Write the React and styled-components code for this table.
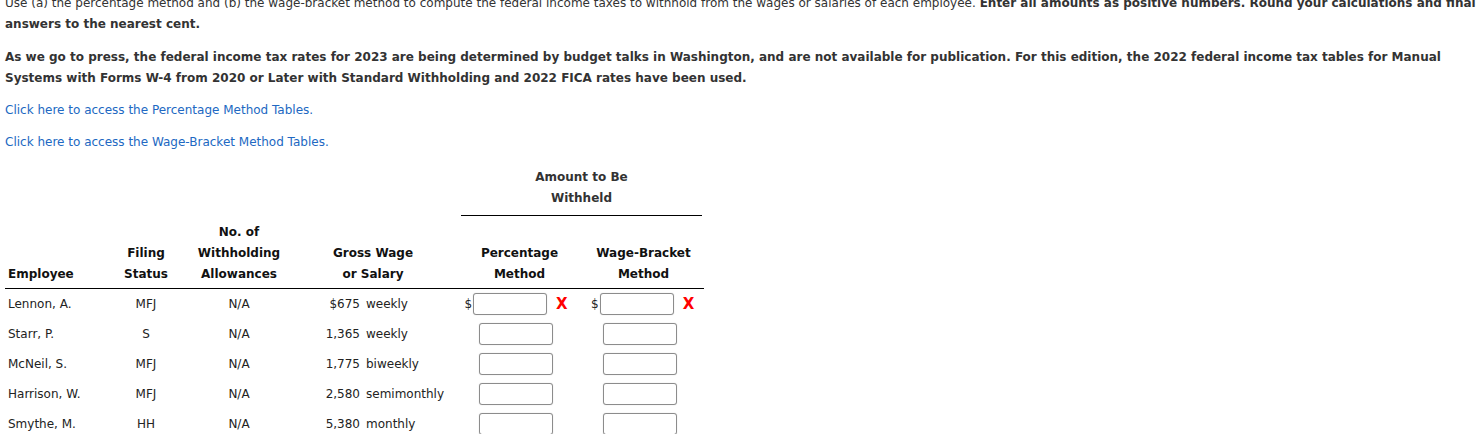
import React from "react";
import styled, { createGlobalStyle } from "styled-components";

const Global = createGlobalStyle`
  html, body { margin: 0; padding: 0; background: #fff; overflow: hidden; }
  body { font-family: "DejaVu Sans", Verdana, sans-serif; }
`;

const Page = styled.div`
  margin-top: -7px;
  padding-left: 5px;
  font-size: 12px;
  line-height: 21px;
  color: #333;
`;

const Para = styled.p`
  margin: 0 0 ${(p) => p.$gap ?? 11}px;
  font-weight: ${(p) => (p.$bold ? 700 : 400)};
`;

const Strong = styled.strong`
  font-weight: 700;
`;

const Link = styled.a`
  color: #2168c2;
  text-decoration: none;
  cursor: pointer;
`;

const Table = styled.table`
  border-collapse: collapse;
  table-layout: fixed;
  width: 699px;
  margin-top: 14px;
  font-size: 12px;
  line-height: 21px;
  color: #222;
`;

const GroupCell = styled.th`
  padding: 0;
  font-weight: 700;
  color: #333;
`;

const GroupHead = styled.div`
  margin: 0 2px 0 13px;
  padding-bottom: 6px;
  border-bottom: 1px solid #000;
  text-align: center;
`;

const HeadCell = styled.th`
  padding: 6px 0 3px ${(p) => (p.$left ? "3px" : "0")};
  border-bottom: 1px solid #000;
  vertical-align: bottom;
  text-align: ${(p) => (p.$left ? "left" : "center")};
  font-weight: 700;
  color: #111;
`;

const Cell = styled.td`
  height: 30px;
  padding: 0 ${(p) => p.$pr || 0}px 0 ${(p) => p.$pl || 0}px;
  vertical-align: middle;
  text-align: ${(p) => p.$align || "center"};
  white-space: nowrap;
`;

const Amount = styled.span`
  display: inline-block;
  width: 40px;
  text-align: right;
`;

const Unit = styled.span`
  margin-left: 6px;
`;

const Dollar = styled.span`
  margin-right: 1px;
  vertical-align: middle;
`;

const Input = styled.input`
  box-sizing: border-box;
  width: 74px;
  height: 22px;
  border: 1px solid #8c8c8c;
  border-radius: 3px;
  box-shadow: 0 0 1px rgba(0, 0, 0, 0.25);
  background: #fff;
  padding: 0 4px;
  margin: 0;
  vertical-align: middle;
  font: inherit;
`;

const Wrong = styled.span`
  margin-left: 9px;
  color: #f00;
  font-weight: 700;
  font-size: 15px;
  vertical-align: middle;
`;

const rows = [
  ["Lennon, A.", "MFJ", "N/A", "$675", "weekly"],
  ["Starr, P.", "S", "N/A", "1,365", "weekly"],
  ["McNeil, S.", "MFJ", "N/A", "1,775", "biweekly"],
  ["Harrison, W.", "MFJ", "N/A", "2,580", "semimonthly"],
  ["Smythe, M.", "HH", "N/A", "5,380", "monthly"],
];

function AnswerCell({ first }) {
  return (
    <Cell $pr={7}>
      {first && <Dollar>$</Dollar>}
      <Input type="text" />
      {first && <Wrong>X</Wrong>}
    </Cell>
  );
}

export default function App() {
  return (
    <>
      <Global />
      <Page>
        <Para $gap={12}>
          Use (a) the percentage method and (b) the wage-bracket method to compute the federal income taxes to
          withhold from the wages or salaries of each employee.{" "}
          <Strong>Enter all amounts as positive numbers. Round your calculations and final answers to the nearest cent.</Strong>
        </Para>
        <Para $bold>
          As we go to press, the federal income tax rates for 2023 are being determined by budget talks in Washington,
          and are not available for publication. For this edition, the 2022 federal income tax tables for Manual
          Systems with Forms W-4 from 2020 or Later with Standard Withholding and 2022 FICA rates have been used.
        </Para>
        <Para>
          <Link>Click here to access the Percentage Method Tables.</Link>
        </Para>
        <Para $gap={0}>
          <Link>Click here to access the Wage-Bracket Method Tables.</Link>
        </Para>
        <Table>
          <colgroup>
            <col style={{ width: 107 }} />
            <col style={{ width: 68 }} />
            <col style={{ width: 118 }} />
            <col style={{ width: 150 }} />
            <col style={{ width: 143 }} />
            <col style={{ width: 105 }} />
            <col style={{ width: 8 }} />
          </colgroup>
          <thead>
            <tr>
              <GroupCell colSpan={4} />
              <GroupCell colSpan={3}>
                <GroupHead>
                  Amount to Be
                  <br />
                  Withheld
                </GroupHead>
              </GroupCell>
            </tr>
            <tr>
              <HeadCell $left>Employee</HeadCell>
              <HeadCell>
                Filing
                <br />
                Status
              </HeadCell>
              <HeadCell>
                No. of
                <br />
                Withholding
                <br />
                Allowances
              </HeadCell>
              <HeadCell>
                Gross Wage
                <br />
                or Salary
              </HeadCell>
              <HeadCell>
                Percentage
                <br />
                Method
              </HeadCell>
              <HeadCell>
                Wage-Bracket
                <br />
                Method
              </HeadCell>
              <HeadCell />
            </tr>
          </thead>
          <tbody>
            {rows.map((r, i) => (
              <tr key={r[0]}>
                <Cell $align="left" $pl={3}>{r[0]}</Cell>
                <Cell>{r[1]}</Cell>
                <Cell>{r[2]}</Cell>
                <Cell $align="left" $pl={22}>
                  <Amount>{r[3]}</Amount>
                  <Unit>{r[4]}</Unit>
                </Cell>
                <AnswerCell first={i === 0} />
                <AnswerCell first={i === 0} />
                <Cell />
              </tr>
            ))}
          </tbody>
        </Table>
      </Page>
    </>
  );
}
